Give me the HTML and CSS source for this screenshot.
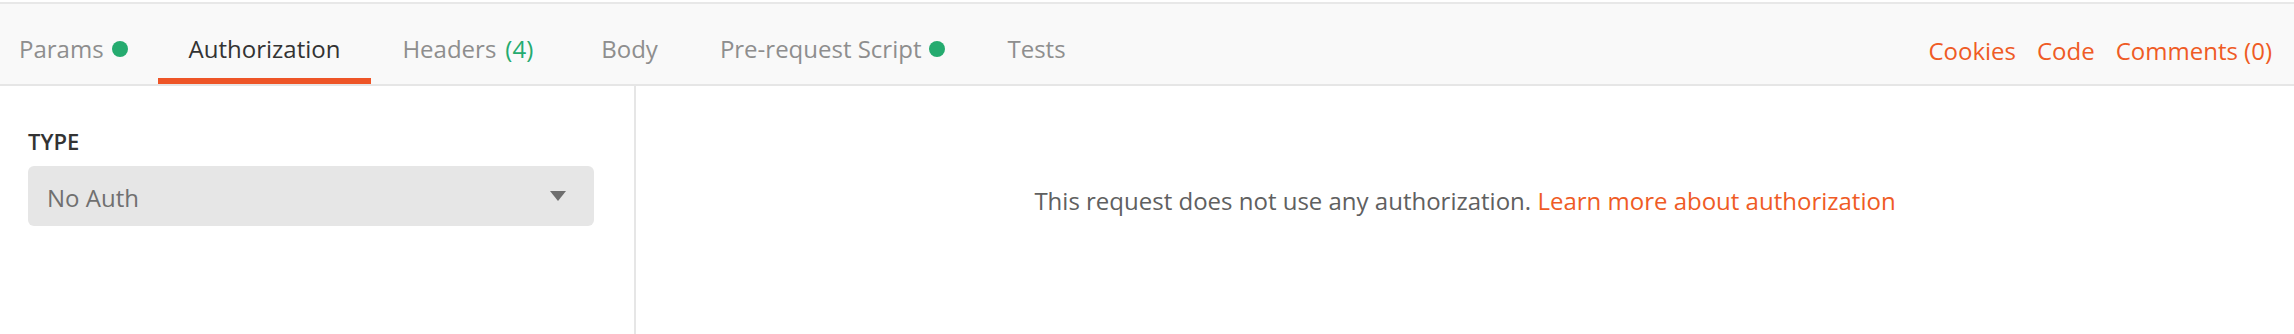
FILE: index.html
```
<!DOCTYPE html>
<html lang="en">
<head>
<meta charset="utf-8">
<title>Authorization</title>
<link rel="stylesheet" href="styles.css">
</head>
<body>
<div class="page">
  <div class="tabbar">
    <div class="tabs">
      <div class="tab tab-first">Params<span class="dot"></span></div>
      <div class="tab tab-active">Authorization</div>
      <div class="tab">Headers<span class="count">(4)</span></div>
      <div class="tab">Body</div>
      <div class="tab">Pre-request Script<span class="dot"></span></div>
      <div class="tab">Tests</div>
    </div>
    <div class="actions">
      <a class="action">Cookies</a>
      <a class="action">Code</a>
      <a class="action">Comments (0)</a>
    </div>
  </div>
  <div class="content">
    <div class="left">
      <div class="label">TYPE</div>
      <div class="select">
        <span class="select-text">No Auth</span>
        <svg class="caret" width="16" height="10" viewBox="0 0 16 10"><path d="M0 0H16L8 10Z" fill="#6e6e6e"/></svg>
      </div>
    </div>
    <div class="right">
      <p class="message">This request does not use any authorization. <a class="link">Learn more about authorization</a></p>
    </div>
  </div>
</div>
</body>
</html>
```

FILE: styles.css
```
html, body {
  margin: 0;
  padding: 0;
  background: #ffffff;
}

body {
  font-family: "Open Sans", "Liberation Sans", sans-serif;
  font-size: 24px;
}

.page {
  padding-top: 2px;
  width: 2294px;
  height: 334px;
  box-sizing: border-box;
  display: flex;
  flex-direction: column;
}

.tabbar {
  height: 84px;
  box-sizing: border-box;
  border-top: 2px solid #e8e8e8;
  border-bottom: 2px solid #e6e6e6;
  background: #f9f9f9;
  display: flex;
  justify-content: space-between;
}

.tabs {
  display: flex;
}

.tab {
  padding: 16px 31px 0 31px;
  line-height: 58px;
  border-bottom: 6px solid transparent;
  color: #8e8e8e;
  display: flex;
  align-items: center;
  white-space: nowrap;
}

.tab-first {
  padding-left: 19px;
  padding-right: 30px;
}

.tab-active {
  color: #333333;
  border-bottom-color: #ee5527;
}

.dot {
  width: 16px;
  height: 16px;
  border-radius: 50%;
  background: #25ab6f;
  margin-left: 8px;
  margin-top: -1px;
}

.count {
  color: #25ab6f;
  margin-left: 9px;
  margin-right: 6px;
}

.actions {
  display: flex;
  gap: 21px;
  padding: 30px 22px 0 0;
}

.action {
  color: #ef5b25;
  white-space: nowrap;
}

.content {
  flex: 1;
  display: flex;
}

.left {
  flex: none;
  box-sizing: border-box;
  border-right: 2px solid #e6e6e6;
  width: 636px;
  padding: 40px 40px 0 28px;
}

.label {
  font-size: 22px;
  font-weight: 600;
  line-height: 30px;
  color: #333333;
}

.select {
  margin-top: 10px;
  height: 60px;
  box-sizing: border-box;
  background: #e6e6e6;
  border-radius: 6px;
  display: flex;
  align-items: center;
  justify-content: space-between;
  padding: 2px 28px 0 19px;
}

.select-text {
  color: #707070;
}

.caret {
  display: block;
  margin-top: -2px;
}

.right {
  flex: 1;
  text-align: center;
  padding-top: 98px;
}

.message {
  margin: 0;
  color: #606060;
  line-height: 33px;
}

.link {
  color: #ef5b25;
}
```
